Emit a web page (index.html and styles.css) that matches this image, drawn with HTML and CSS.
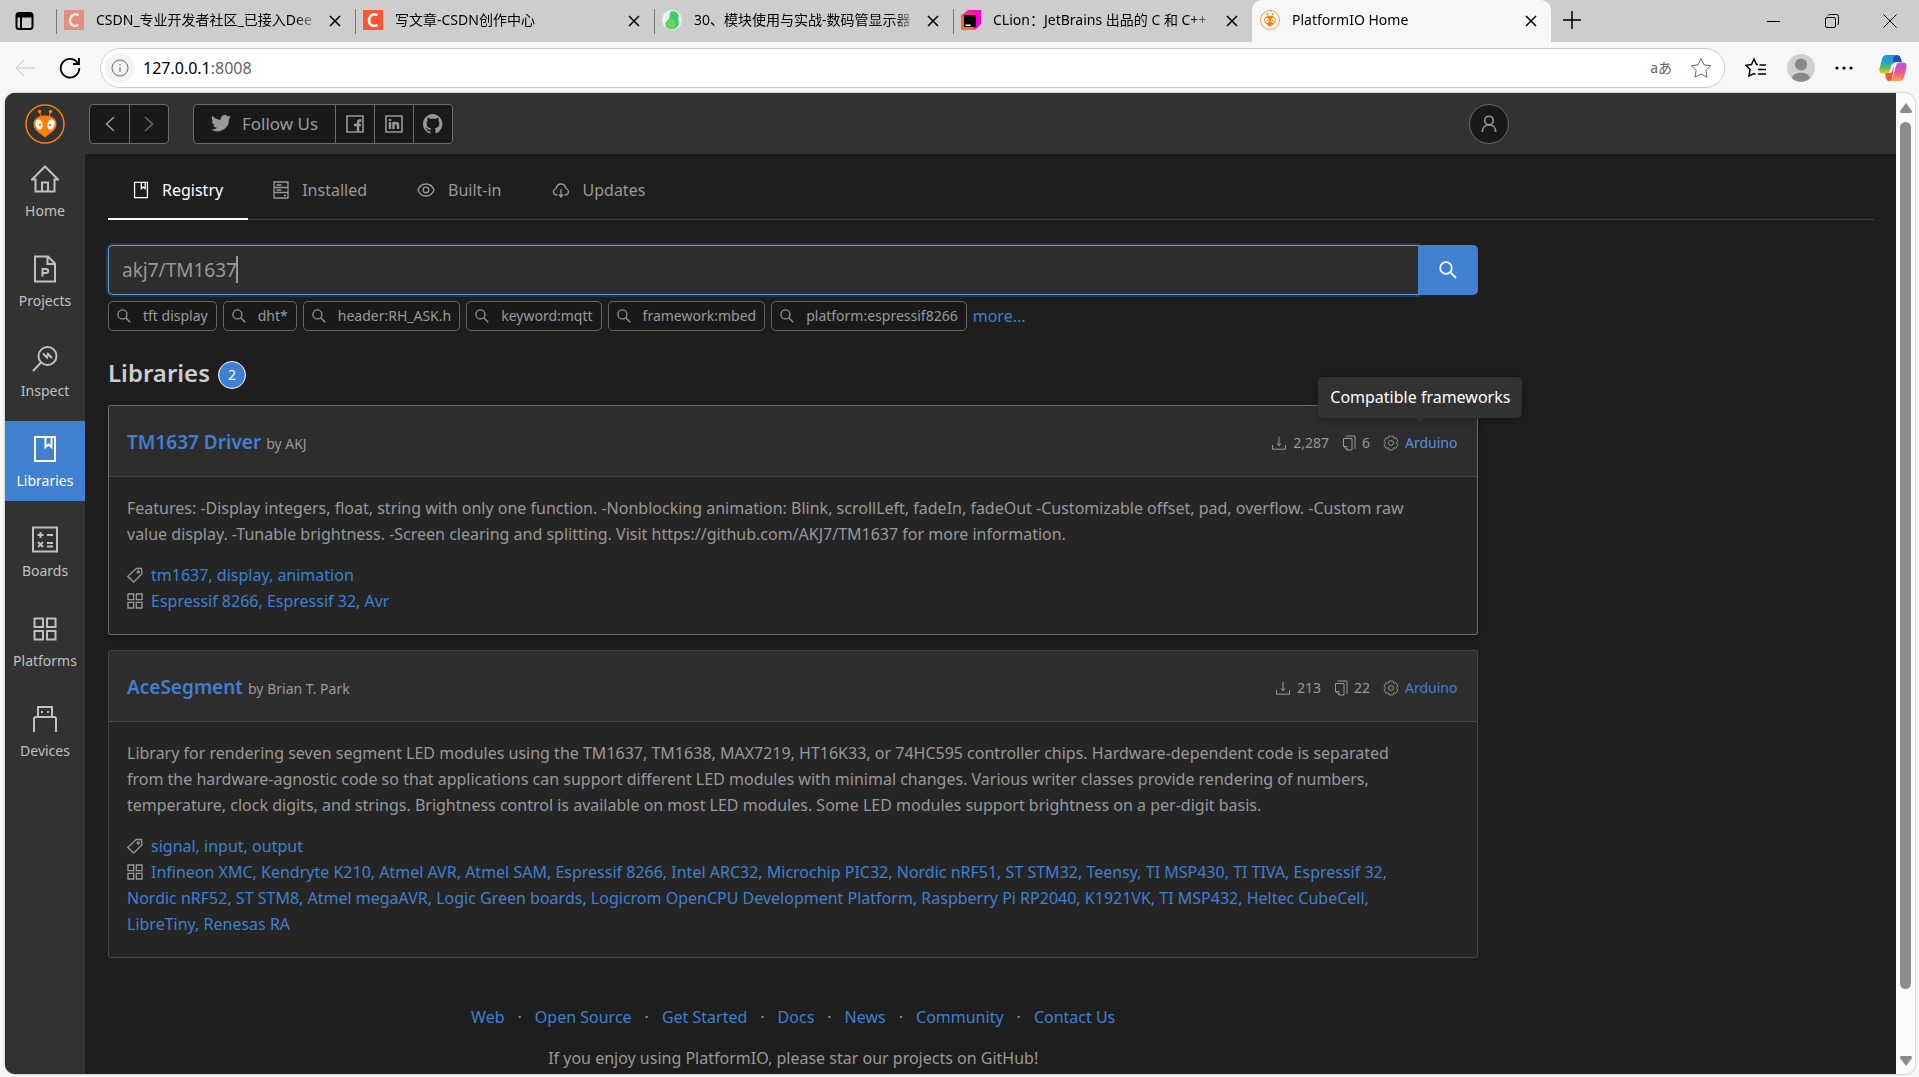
FILE: index.html
```html
<!DOCTYPE html>
<html lang="en">
<head>
    <meta charset="UTF-8">
    <meta name="viewport" content="width=device-width, initial-scale=1.0">
    <title>PlatformIO Home</title>
    <link rel="stylesheet" href="styles.css">
</head>
<body>
    <!-- Shared icons -->
    <svg class="sprite" aria-hidden="true">
        <symbol id="close" viewBox="0 0 12 12"><path d="M1 1l10 10M11 1L1 11"/></symbol>
        <symbol id="search" viewBox="0 0 18 18"><circle cx="7" cy="7" r="5.8"/><path d="M11.2 11.2L17 17"/></symbol>
        <symbol id="book" viewBox="0 0 24 28"><path d="M2 2h20v24H2zM12.500 2v10l3-2.500 3 2.500V2"/></symbol>
        <symbol id="grid" viewBox="0 0 24 24"><path d="M1.500 1.500h8.500v8.500H1.500zM14 1.500h8.500v8.500H14zM1.500 14h8.500v8.500H1.500zM14 14h8.500v8.500H14z"/></symbol>
        <symbol id="tag" viewBox="0 0 18 18"><path d="M10.500 1.500l5.800.2.500 6L7.500 17 1 10.500z"/><circle cx="12.700" cy="5.500" r="1.200"/></symbol>
        <symbol id="download" viewBox="0 0 16 16"><path d="M1.500 10v4.200h13V10M8 1.500v9M6 8.200l2 2.600 2-2.600"/></symbol>
        <symbol id="copies" viewBox="0 0 14 16"><path d="M3.500 1H13v13M1.500 3.500H10V15H5l-3.500-3.500zM1.500 11.500H5V15"/></symbol>
        <symbol id="gear" viewBox="0 0 18 18"><path d="M6.800 1.200h4.400l.9 2.400 2.550-.4 2.200 3.800L15.200 9l1.650 2-2.200 3.800-2.550-.4-.9 2.400H6.800l-.9-2.400-2.550.4-2.200-3.800L2.800 9 1.150 7l2.200-3.800 2.550.4z"/><circle cx="9" cy="9" r="2.800"/></symbol>
        <symbol id="ant" viewBox="0 0 40 40"><circle class="ring" cx="20" cy="20" r="19"/><path class="feeler" d="M14.500 8l2 6M25.500 8l-2 6"/><circle class="face" cx="14.500" cy="7.500" r="1.700"/><circle class="face" cx="25.500" cy="7.500" r="1.700"/><path class="face" d="M20 11.500c7 0 11.500 3.500 11.500 8.500 0 6-6 9-11.500 13.500-5.500-4.500-11.500-7.500-11.500-13.500 0-5 4.500-8.500 11.500-8.500z"/><ellipse class="eye" cx="14" cy="20.500" rx="3.600" ry="5.200" transform="rotate(-14 14 20.500)"/><ellipse class="eye" cx="26" cy="20.500" rx="3.600" ry="5.200" transform="rotate(14 26 20.500)"/><circle class="face" cx="15" cy="21" r="1.300"/><circle class="face" cx="25" cy="21" r="1.300"/></symbol>
    </svg>

    <!-- Browser tabs -->
    <div class="tab-strip">
        <button class="tab-menu" aria-label="Tab actions">
            <svg width="20" height="20" viewBox="0 0 20 20"><rect x="1.500" y="2" width="16" height="16" rx="2.500"/><path d="M1.500 4h16M1.500 5.500h16M6 6v12"/></svg>
        </button>
        <div class="tab">
            <svg class="favicon faded" viewBox="0 0 20 20"><path fill="#fc5531" d="M0 0h20v20H0z"/><path class="mark" d="M14.500 5.200C10 2.500 6 6 6 10.500c0 5 4.500 6.500 8.500 4.500"/></svg>
            <span class="tab-title">CSDN_专业开发者社区_已接入Dee</span>
            <button class="tab-close" aria-label="Close tab"><svg width="12" height="12"><use href="#close"/></svg></button>
        </div>
        <div class="tab">
            <svg class="favicon" viewBox="0 0 20 20"><path fill="#fc5531" d="M0 0h20v20H0z"/><path class="mark" d="M14.500 5.200C10 2.500 6 6 6 10.500c0 5 4.500 6.500 8.500 4.500"/></svg>
            <span class="tab-title">写文章-CSDN创作中心</span>
            <button class="tab-close" aria-label="Close tab"><svg width="12" height="12"><use href="#close"/></svg></button>
        </div>
        <div class="tab">
            <svg class="favicon" viewBox="0 0 20 20"><circle cx="10" cy="10" r="10" fill="#eafaf0"/><path fill="#3fcb70" d="M9 1.500c4-1 7 1 7.500 4 .5 2-1 3 0 5.500 1.500 4-1.500 7.500-5.500 8-5 .5-8-2-7.500-5.500.5-3 3.500-3.500 4-6 .3-2-.5-4 1.500-6z"/><circle cx="9" cy="14" r="4.500" fill="#6fd35a"/></svg>
            <span class="tab-title">30、模块使用与实战-数码管显示器</span>
            <button class="tab-close" aria-label="Close tab"><svg width="12" height="12"><use href="#close"/></svg></button>
        </div>
        <div class="tab">
            <svg class="favicon" viewBox="0 0 20 20"><path fill="#f0c" d="M7 0h13v14l-6 6-10-9z"/><path fill="#ff6a1a" d="M0 6l4-3 10 17H0z"/><path fill="#f5268a" d="M0 6l7-6 8 3-2 10-9-6z"/><path fill="#000" d="M3 5h12v12H3z"/><path fill="#fff" d="M4.500 14.500h5V16h-5z"/></svg>
            <span class="tab-title">CLion：JetBrains 出品的 C 和 C++</span>
            <button class="tab-close" aria-label="Close tab"><svg width="12" height="12"><use href="#close"/></svg></button>
        </div>
        <div class="tab active">
            <svg class="favicon ant"><use href="#ant"/></svg>
            <span class="tab-title">PlatformIO Home</span>
            <button class="tab-close" aria-label="Close tab"><svg width="12" height="12"><use href="#close"/></svg></button>
        </div>
        <button class="new-tab" aria-label="New tab"><svg width="18" height="18" viewBox="0 0 18 18"><path d="M9 0v18M0 9h18"/></svg></button>
        <div class="window-buttons">
            <button aria-label="Minimize"><svg width="14" height="14" viewBox="0 0 14 14"><path d="M0 7.500h13"/></svg></button>
            <button aria-label="Restore"><svg width="14" height="14" viewBox="0 0 14 14"><rect x=".5" y="3.500" width="10" height="10" rx="1.500"/><path d="M3 1.500Q3.500.5 5 .5h6.500q2 0 2 2V9q0 1.500-1 2"/></svg></button>
            <button aria-label="Close"><svg width="14" height="14" viewBox="0 0 14 14"><path d="M.5.5l13 13M13.500.5l-13 13"/></svg></button>
        </div>
    </div>

    <!-- Address bar -->
    <div class="toolbar">
        <button class="tool disabled" aria-label="Back"><svg width="20" height="18" viewBox="0 0 20 18"><path d="M20 9H1M9 1L1 9l8 8"/></svg></button>
        <button class="tool" aria-label="Reload"><svg width="22" height="22" viewBox="0 0 22 22"><path class="thick" d="M19 6.500A9.300 9.300 0 1 0 20.300 11M20 1v6h-6"/></svg></button>
        <div class="address">
            <button class="site-info" aria-label="Site information"><svg width="18" height="18" viewBox="0 0 18 18"><circle cx="9" cy="9" r="8"/><path d="M9 8v5M9 5v1.500"/></svg></button>
            <span class="url">127.0.0.1<span>:8008</span></span>
            <button class="translate" aria-label="Translate">aあ</button>
            <button class="star" aria-label="Add to favorites"><svg width="22" height="22" viewBox="0 0 22 22"><path d="M11 1.500l3 6.300 6.700.9-4.900 4.700 1.200 6.800-6-3.300-6 3.300 1.200-6.800L1.300 8.700 8 7.800z"/></svg></button>
        </div>
        <div class="browser-tools">
            <button aria-label="Favorites"><svg width="22" height="22" viewBox="0 0 22 22"><path d="M13 7.500h-1.500L9 2 6.500 7.500 1 8.300l4 4.200L4 19l5-2.500 1.500 1M14.500 8H21M13 12.500h8M13 17h8"/></svg></button>
            <button aria-label="Profile"><svg width="28" height="28" viewBox="0 0 28 28"><circle class="avatar-bg" cx="14" cy="14" r="14"/><path class="avatar-fg" d="M5 24c1-7 17-7 18 0-5 5-13 5-18 0z"/><circle class="avatar-fg" cx="14" cy="10.500" r="6"/></svg></button>
            <button aria-label="Settings and more"><svg width="18" height="6" viewBox="0 0 18 6"><circle class="dot" cx="2" cy="3" r="1.600"/><circle class="dot" cx="9" cy="3" r="1.600"/><circle class="dot" cx="16" cy="3" r="1.600"/></svg></button>
            <button aria-label="Copilot">
                <svg class="copilot" width="28" height="28" viewBox="0 0 28 28">
                    <defs>
                        <linearGradient id="cool" x1="0" y1="0" x2="0" y2="1"><stop offset="0" stop-color="#1b94e8"/><stop offset=".4" stop-color="#1ea7c4"/><stop offset=".7" stop-color="#67bb4c"/><stop offset="1" stop-color="#f4cf0f"/></linearGradient>
                        <linearGradient id="warm" x1="0" y1="0" x2="0" y2="1"><stop offset="0" stop-color="#a75bee"/><stop offset=".5" stop-color="#ee5590"/><stop offset="1" stop-color="#ffa04d"/></linearGradient>
                    </defs>
                    <path fill="#1650cf" d="M13 1h5c2.500 0 3 1.500 4 4l1 3h-6c-2 0-3 1-3.500 3z"/>
                    <path fill="#f2553d" d="M6 19h6l3-7-2 13c-.5 1.500-1 2-3 2-2.500 0-3-3-4-8z"/>
                    <path fill="url(#cool)" d="M8 1h9c-2 1-2.500 3-3 5l-3 10c-.7 2.500-1.500 3.500-4 3.500H4c-3 0-4-2-3.500-5L3 5c.7-2.500 2-4 5-4z"/>
                    <path fill="url(#warm)" d="M20 27h-9c2-1 2.500-3 3-5l3-10c.7-2.500 1.500-3.500 4-3.500h3c3 0 4 2 3.500 5L25 23c-.7 2.500-2 4-5 4z"/>
                </svg>
            </button>
        </div>
    </div>

    <div class="viewport">
        <div class="app">
            <header class="app-header">
                <a class="logo" href="#" aria-label="PlatformIO"><svg class="ant" width="40" height="40"><use href="#ant"/></svg></a>
                <div class="btn-group history">
                    <button aria-label="Go back"><svg width="10" height="16" viewBox="0 0 10 16"><path d="M9 1L1.500 8 9 15"/></svg></button>
                    <button class="dim" aria-label="Go forward"><svg width="10" height="16" viewBox="0 0 10 16"><path d="M1 1l7.500 7L1 15"/></svg></button>
                </div>
                <div class="btn-group social">
                    <a class="follow" href="#"><svg class="solid" width="20" height="17" viewBox="0 0 20 17"><path d="M20 2c-.8.4-1.500.6-2.300.7.900-.5 1.500-1.300 1.800-2.300-.8.500-1.700.8-2.600 1A4.100 4.100 0 0 0 9.800 5C6.400 4.900 3.400 3.300 1.400.8.300 2.700.8 5 2.600 6.200c-.6 0-1.300-.2-1.800-.5 0 2 1.300 3.700 3.200 4.100-.6.200-1.200.2-1.800.1.500 1.600 2 2.800 3.800 2.800A8.300 8.300 0 0 1 0 14.500 11.700 11.700 0 0 0 18 4.100c.8-.6 1.500-1.300 2-2.100z"/></svg>Follow Us</a>
                    <a href="#" aria-label="Facebook"><svg width="18" height="18" viewBox="0 0 18 18"><path d="M1 1h16v16H1z"/><path class="heavy" d="M12 17V7.500q0-2 2-2h1.500M8 10h7"/></svg></a>
                    <a href="#" aria-label="LinkedIn"><svg width="18" height="18" viewBox="0 0 18 18"><path d="M1 1h16v16H1z"/><path class="heavy" d="M5 7v7M5 4v2M8.500 14V7M8.500 10q0-2 2.200-2t2.300 2v4"/></svg></a>
                    <a href="#" aria-label="GitHub"><svg class="solid" width="20" height="20" viewBox="0 0 16 16"><path d="M8 0C3.600 0 0 3.600 0 8c0 3.500 2.300 6.500 5.500 7.600.4.100.5-.2.500-.4v-1.500c-2 .4-2.600-.5-2.700-1-.1-.2-.5-.9-.8-1.100-.3-.2-.7-.6 0-.6s1.100.6 1.200.8c.7 1.200 1.900.9 2.300.7.100-.5.300-.9.500-1.100-1.800-.2-3.600-.9-3.600-4 0-.9.300-1.600.8-2.200-.1-.2-.4-1 .1-2.100 0 0 .7-.2 2.200.8a7.500 7.500 0 0 1 4 0c1.500-1 2.200-.8 2.200-.8.500 1.100.2 1.900.1 2.100.5.600.8 1.300.8 2.200 0 3.100-1.900 3.700-3.700 3.900.3.300.6.800.6 1.500v2.200c0 .2.100.5.500.4A8 8 0 0 0 8 0z"/></svg></a>
                </div>
                <button class="account" aria-label="Account"><svg width="18" height="20" viewBox="0 0 18 20"><circle cx="9" cy="6" r="4.800"/><path d="M1.500 19c0-5 3-8.200 7.500-8.200s7.500 3.200 7.500 8.200"/></svg></button>
            </header>

            <nav class="sidebar">
                <a href="#"><svg width="28" height="28" viewBox="0 0 28 28"><path d="M1 14.500L14 1.500l13 13h-3.500V26.500h-19V14.500zM11 26v-8.500h6V26"/></svg>Home</a>
                <a href="#"><svg width="28" height="28" viewBox="0 0 28 28"><path d="M4 1.500h13l7 7v18H4zM16.500 2v7H24M11.500 21.500V14h3.500q2.200 0 2.200 2t-2.200 2h-3.500"/></svg>Projects</a>
                <a href="#"><svg width="28" height="28" viewBox="0 0 28 28"><circle cx="16.500" cy="11" r="9"/><path d="M10 17.500L2 26M12 8.500l4 4 1-3.500 4 4"/></svg>Inspect</a>
                <a href="#" class="selected"><svg width="24" height="28"><use href="#book"/></svg>Libraries</a>
                <a href="#"><svg width="28" height="28" viewBox="0 0 28 28"><path d="M2 2.500h24v24H2zM9.500 7v6M6.500 10h6M16 10h6M7 17l5 5M12 17l-5 5M16 18h6M16 21.500h6"/></svg>Boards</a>
                <a href="#"><svg width="24" height="24"><use href="#grid"/></svg>Platforms</a>
                <a href="#"><svg width="28" height="28" viewBox="0 0 28 28"><path d="M3 27V14q0-2 2-2h18q2 0 2 2v13M7 12V2h14v10M11 6v2M17 6v2"/></svg>Devices</a>
            </nav>

            <main class="content">
                <nav class="page-tabs">
                    <a href="#" class="current"><svg width="16" height="18"><use href="#book"/></svg>Registry</a>
                    <a href="#"><svg width="16" height="18" viewBox="0 0 16 18"><path d="M1 1h14v16H1zM1 6.500h14M1 11.500h14M3.500 4h5M3.500 9h5M11 14.500h2"/></svg>Installed</a>
                    <a href="#"><svg width="18" height="14" viewBox="0 0 18 14"><path d="M1 7c3-8 13-8 16 0-3 8-13 8-16 0z"/><circle cx="9" cy="7" r="2.800"/></svg>Built-in</a>
                    <a href="#"><svg width="18" height="16" viewBox="0 0 18 16"><path d="M5.500 13C1 13 0 8 4 6.500 5.500.5 12.500.5 14 6.500c4 1.500 3 6.500-1.500 6.500M9 7v8M7 12.500L9 15l2-2.500"/></svg>Updates</a>
                </nav>

                <div class="column">
                    <form class="search">
                        <div class="search-field">
                            <input type="text" value="akj7/TM1637" aria-label="Search libraries">
                            <span class="caret"></span>
                        </div>
                        <button type="button" aria-label="Search"><svg width="18" height="18"><use href="#search"/></svg></button>
                    </form>
                    <div class="examples">
                        <button><svg width="14" height="14"><use href="#search"/></svg>tft display</button>
                        <button><svg width="14" height="14"><use href="#search"/></svg>dht*</button>
                        <button><svg width="14" height="14"><use href="#search"/></svg>header:RH_ASK.h</button>
                        <button><svg width="14" height="14"><use href="#search"/></svg>keyword:mqtt</button>
                        <button><svg width="14" height="14"><use href="#search"/></svg>framework:mbed</button>
                        <button><svg width="14" height="14"><use href="#search"/></svg>platform:espressif8266</button>
                        <a href="#">more...</a>
                    </div>

                    <h1>Libraries <span class="count">2</span></h1>

                    <article class="card hovered">
                        <header>
                            <h2><a href="#">TM1637 Driver</a> <small>by AKJ</small></h2>
                            <div class="stats">
                                <span><svg width="16" height="16"><use href="#download"/></svg>2,287</span>
                                <span><svg width="14" height="16"><use href="#copies"/></svg>6</span>
                                <span class="framework"><svg width="16" height="16"><use href="#gear"/></svg><a href="#">Arduino</a><span class="tooltip" role="tooltip">Compatible frameworks</span></span>
                            </div>
                        </header>
                        <div class="card-body">
                            <p>Features: -Display integers, float, string with only one function. -Nonblocking animation: Blink, scrollLeft, fadeIn, fadeOut -Customizable offset, pad, overflow. -Custom raw value display. -Tunable brightness. -Screen clearing and splitting. Visit https://github.com/AKJ7/TM1637 for more information.</p>
                            <div class="links"><svg width="16" height="16"><use href="#tag"/></svg><a href="#">tm1637,</a> <a href="#">display,</a> <a href="#">animation</a></div>
                            <div class="links"><svg class="bold" width="16" height="16"><use href="#grid"/></svg><a href="#">Espressif 8266,</a> <a href="#">Espressif 32,</a> <a href="#">Avr</a></div>
                        </div>
                    </article>

                    <article class="card">
                        <header>
                            <h2><a href="#">AceSegment</a> <small>by Brian T. Park</small></h2>
                            <div class="stats">
                                <span><svg width="16" height="16"><use href="#download"/></svg>213</span>
                                <span><svg width="14" height="16"><use href="#copies"/></svg>22</span>
                                <span class="framework"><svg width="16" height="16"><use href="#gear"/></svg><a href="#">Arduino</a></span>
                            </div>
                        </header>
                        <div class="card-body">
                            <p>Library for rendering seven segment LED modules using the TM1637, TM1638, MAX7219, HT16K33, or 74HC595 controller chips. Hardware-dependent code is separated from the hardware-agnostic code so that applications can support different LED modules with minimal changes. Various writer classes provide rendering of numbers, temperature, clock digits, and strings. Brightness control is available on most LED modules. Some LED modules support brightness on a per-digit basis.</p>
                            <div class="links"><svg width="16" height="16"><use href="#tag"/></svg><a href="#">signal,</a> <a href="#">input,</a> <a href="#">output</a></div>
                            <div class="links">
                                <svg class="bold" width="16" height="16"><use href="#grid"/></svg><a href="#">Infineon XMC,</a>
                                <a href="#">Kendryte K210,</a>
                                <a href="#">Atmel AVR,</a>
                                <a href="#">Atmel SAM,</a>
                                <a href="#">Espressif 8266,</a>
                                <a href="#">Intel ARC32,</a>
                                <a href="#">Microchip PIC32,</a>
                                <a href="#">Nordic nRF51,</a>
                                <a href="#">ST STM32,</a>
                                <a href="#">Teensy,</a>
                                <a href="#">TI MSP430,</a>
                                <a href="#">TI TIVA,</a>
                                <a href="#">Espressif 32,</a>
                                <a href="#">Nordic nRF52,</a>
                                <a href="#">ST STM8,</a>
                                <a href="#">Atmel megaAVR,</a>
                                <a href="#">Logic Green boards,</a>
                                <a href="#">Logicrom OpenCPU Development Platform,</a>
                                <a href="#">Raspberry Pi RP2040,</a>
                                <a href="#">K1921VK,</a>
                                <a href="#">TI MSP432,</a>
                                <a href="#">Heltec CubeCell,</a>
                                <a href="#">LibreTiny,</a>
                                <a href="#">Renesas RA</a>
                            </div>
                        </div>
                    </article>

                    <footer class="app-footer">
                        <ul>
                            <li><a href="#">Web</a></li>
                            <li><a href="#">Open Source</a></li>
                            <li><a href="#">Get Started</a></li>
                            <li><a href="#">Docs</a></li>
                            <li><a href="#">News</a></li>
                            <li><a href="#">Community</a></li>
                            <li><a href="#">Contact Us</a></li>
                        </ul>
                        <p>If you enjoy using PlatformIO, please star our projects on GitHub!</p>
                    </footer>
                </div>
            </main>
        </div>
        <div class="scrollbar">
            <svg width="12" height="10" viewBox="0 0 12 10"><path d="M6 0l6 8q0 2-1 2H1q-1 0-1-2z"/></svg>
            <div class="thumb"></div>
            <svg width="12" height="10" viewBox="0 0 12 10"><path d="M6 10l6-8q0-2-1-2H1Q0 0 0 2z"/></svg>
        </div>
    </div>
</body>
</html>
```
FILE: styles.css
```css
* {
    box-sizing: border-box;
}

body {
    margin: 0;
    height: 100vh;
    display: flex;
    flex-direction: column;
    overflow: hidden;
    background: #f7f7f7;
    color: #000;
    font-family: "Noto Sans", "Noto Sans CJK SC", sans-serif;
    font-size: 16px;
    line-height: 26px;
}

a {
    color: #3f80d1;
    text-decoration: none;
}

button {
    font: inherit;
    color: inherit;
    background: none;
    border: none;
    padding: 0;
    display: flex;
    align-items: center;
    justify-content: center;
}

svg {
    fill: none;
    stroke: currentColor;
    flex-shrink: 0;
}

.sprite {
    display: none;
}

.solid {
    fill: currentColor;
    stroke: none;
}

.ring {
    fill: none;
    stroke: #ff7f00;
    stroke-width: 1.5;
}

.face {
    fill: #ff7f00;
    stroke: none;
}

.feeler {
    stroke: #ff7f00;
}

.eye {
    fill: #fff;
    stroke: none;
}

/* Browser tabs */
.tab-strip {
    display: flex;
    height: 42px;
    flex-shrink: 0;
    background: #cdcdcd;
    font-size: 14px;
    line-height: 20px;
}

.tab-menu {
    width: 56px;
    padding-right: 6px;
}

.tab-menu svg {
    stroke-width: 2;
}

.tab {
    display: flex;
    align-items: center;
    flex: 0 1 299px;
    min-width: 0;
    padding: 0 14px 2px 8px;
    background: linear-gradient(#777, #777) 0 9px / 1px 25px no-repeat;
}

.tab.active {
    background: #f7f7f7;
    border-radius: 10px 10px 0 0;
}

.favicon {
    width: 20px;
    height: 20px;
    stroke: none;
}

.faded {
    opacity: 0.5;
}

.mark {
    stroke: #fff;
    stroke-width: 2.5;
}

.tab-title {
    flex: 1;
    margin: 0 8px 0 12px;
    overflow: hidden;
    white-space: nowrap;
    -webkit-mask-image: linear-gradient(90deg, #000 88%, transparent);
    mask-image: linear-gradient(90deg, #000 88%, transparent);
}

.tab-close {
    padding-top: 2px;
}

.new-tab {
    width: 42px;
    padding-bottom: 3px;
}

.tab-close svg,
.new-tab svg {
    stroke-width: 1.5;
}

.window-buttons {
    display: flex;
    margin-left: auto;
}

.window-buttons button {
    width: 58px;
}

/* Address bar */
.toolbar {
    display: flex;
    align-items: center;
    height: 51px;
    flex-shrink: 0;
    padding: 0 12px 0 2px;
}

.tool {
    width: 45px;
}

.disabled {
    color: #c4c4c4;
}

.thick {
    stroke-width: 1.8;
}

.address {
    display: flex;
    align-items: center;
    flex: 1;
    height: 40px;
    margin-left: 8px;
    padding: 0 12px 0 4px;
    background: #fff;
    border: 1px solid #ccc;
    border-radius: 20px;
    color: #666;
}

.site-info {
    width: 30px;
    height: 30px;
    border-radius: 50%;
    background: #f3f3f3;
}

.url {
    flex: 1;
    margin-left: 8px;
    color: #000;
}

.url span {
    color: #666;
}

.translate {
    margin-right: 18px;
    font-size: 14px;
}

.browser-tools {
    display: flex;
    align-items: center;
    gap: 20px;
    padding-left: 20px;
}

.browser-tools svg {
    stroke-width: 1.5;
}

.avatar-bg {
    fill: #d2d0ce;
    stroke: none;
}

.avatar-fg {
    fill: #8a8886;
    stroke: none;
}

.dot {
    fill: #000;
    stroke: none;
}

.browser-tools button:last-child {
    margin-left: 6px;
}

.copilot {
    stroke: none;
}

/* Page area */
.viewport {
    display: flex;
    flex: 1;
    min-height: 0;
    margin: 0 4px 3px 5px;
    border-radius: 10px;
    overflow: hidden;
    box-shadow: 0 0 2px #888;
}

.app {
    flex: 1;
    min-width: 0;
    display: grid;
    grid-template-columns: 80px 1fr;
    grid-template-rows: 61px 1fr;
    background: #1e1e1e;
    color: #999;
}

.scrollbar {
    width: 19px;
    display: flex;
    flex-direction: column;
    align-items: center;
    padding: 10px 0 8px;
    background: #fcfcfc;
}

.scrollbar svg {
    fill: #8b8b8b;
    stroke: none;
}

.thumb {
    width: 11px;
    height: 867px;
    margin: 9px 0 auto;
    border-radius: 6px;
    background: #8b8b8b;
}

/* Header */
.app-header {
    grid-column: 1 / -1;
    display: flex;
    align-items: center;
    background: #323232;
    font-size: 17px;
}

.logo {
    width: 80px;
    display: flex;
    justify-content: center;
}

.btn-group {
    display: flex;
    height: 40px;
    border: 1px solid #6b6b6b;
    border-radius: 4px;
    background: #191919;
}

.btn-group > * {
    display: flex;
    align-items: center;
    justify-content: center;
    width: 39px;
    color: #999;
}

.btn-group > * + * {
    border-left: 1px solid #6b6b6b;
}

.btn-group svg:not(.solid) {
    stroke-width: 1.6;
}

.btn-group .heavy {
    stroke-width: 2.4;
}

.btn-group .dim {
    color: #666;
}

.history {
    margin-left: 4px;
}

.social {
    margin-left: 24px;
}

.btn-group .follow {
    width: 141px;
    gap: 11px;
}

.account {
    width: 40px;
    height: 40px;
    margin-left: auto;
    margin-right: 387px;
    border: 1px solid #6b6b6b;
    border-radius: 50%;
    background: #191919;
    color: #999;
}

.account svg {
    width: 16px;
    stroke-width: 1.8;
}

/* Sidebar */
.sidebar {
    display: flex;
    flex-direction: column;
    gap: 10px;
    background: #323232;
    font-size: 14px;
    line-height: 20px;
}

.sidebar a {
    display: flex;
    flex-direction: column;
    align-items: center;
    justify-content: space-between;
    height: 80px;
    padding: 14px 0 10px;
    color: #c0c0c0;
}

.sidebar a:first-child {
    height: 77px;
    padding-top: 11px;
}

.sidebar svg {
    height: 28px;
    stroke-width: 2;
}

.sidebar a.selected {
    background: #3f80d1;
    color: #fff;
}

/* Content */
.content {
    min-width: 0;
    padding: 0 22px 0 23px;
}

.page-tabs {
    display: flex;
    height: 66px;
    border-bottom: 1px solid #3c3c3c;
}

.page-tabs a {
    display: flex;
    align-items: center;
    gap: 13px;
    height: 66px;
    padding: 8px 25px 0;
    border-bottom: 2px solid transparent;
    color: #999;
}

.page-tabs a.current {
    color: #fff;
    border-bottom-color: #fff;
}

.page-tabs svg {
    stroke-width: 1.3;
}

.page-tabs .current svg {
    stroke-width: 2;
}

.column {
    width: 77.600%;
}

.search {
    display: flex;
    height: 50px;
    margin-top: 25px;
}

.search-field {
    position: relative;
    flex: 1;
}

.search input {
    width: 100%;
    height: 50px;
    padding: 0 13px;
    border: 1px solid #659bdb;
    border-right: none;
    border-radius: 5px 0 0 5px;
    outline: none;
    box-shadow: 0 0 0 2px #24344a;
    background: #2d2d2d;
    color: #999;
    font-family: inherit;
    font-size: 19px;
}

.caret {
    position: absolute;
    left: 128px;
    top: 11px;
    width: 2px;
    height: 27px;
    background: #999;
}

.search button {
    position: relative;
    width: 60px;
    border-radius: 0 5px 5px 0;
    background: #3f80d1;
    color: #fff;
}

.search button svg {
    stroke-width: 1.8;
}

.examples {
    display: flex;
    align-items: center;
    gap: 6px;
    margin-top: 6px;
}

.examples button {
    height: 30px;
    padding: 0 8px;
    gap: 12px;
    border: 1px solid #666;
    border-radius: 5px;
    background: #191919;
    font-size: 14px;
}

.examples svg {
    stroke-width: 1.6;
}

h1 {
    display: flex;
    align-items: center;
    gap: 8px;
    height: 34px;
    margin: 25px 0 15px;
    color: #ccc;
    font-size: 24px;
    font-weight: 600;
}

.count {
    width: 28px;
    height: 28px;
    margin-top: 3px;
    border: 1px solid #fff;
    border-radius: 50%;
    background: #3f80d1;
    color: #fff;
    font-size: 14px;
    font-weight: 400;
    line-height: 26px;
    text-align: center;
}

.card {
    margin-bottom: 15px;
    border: 1px solid #444;
    border-radius: 2px;
    background: #252525;
}

.card.hovered {
    border-color: #6b6b6b;
    box-shadow: 0 2px 8px rgba(0, 0, 0, 0.3);
}

.card header {
    display: flex;
    align-items: center;
    justify-content: space-between;
    height: 71px;
    padding: 3px 20px 0 18px;
    border-bottom: 1px solid #444;
    background: #2d2d2d;
}

.card h2 {
    margin: 0;
    font-size: 19px;
    font-weight: 600;
}

.card small {
    font-size: 14px;
    font-weight: 400;
}

.stats {
    display: flex;
    gap: 13px;
    font-size: 14px;
}

.stats > span {
    display: flex;
    align-items: center;
    gap: 6px;
}

.framework {
    position: relative;
}

.hovered .framework a {
    color: #5592db;
}

.tooltip {
    position: absolute;
    right: -65px;
    bottom: 38px;
    padding: 7px 12px 8px;
    border-radius: 5px;
    background: #323232;
    box-shadow: 0 2px 8px rgba(0, 0, 0, 0.3);
    color: #fff;
    font-size: 16px;
    white-space: nowrap;
}

.tooltip::after {
    content: "";
    position: absolute;
    top: 100%;
    left: 50%;
    margin-left: -4px;
    border: 4px solid transparent;
    border-top-color: #323232;
}

.card-body {
    padding: 18px 65px 20px 18px;
}

.card p {
    margin: 0 0 15px;
}

.links a {
    white-space: nowrap;
}

.links svg {
    margin-right: 8px;
    vertical-align: -2px;
    stroke-width: 1.5;
}

.links .bold {
    stroke-width: 2;
}

/* Footer */
.app-footer {
    padding-top: 31px;
    text-align: center;
}

.app-footer ul {
    display: flex;
    justify-content: center;
    margin: 0;
    padding: 0;
    list-style: none;
}

.app-footer li + li::before {
    content: "·";
    margin: 0 13px;
}

.app-footer p {
    margin: 15px 0 0;
}
```
